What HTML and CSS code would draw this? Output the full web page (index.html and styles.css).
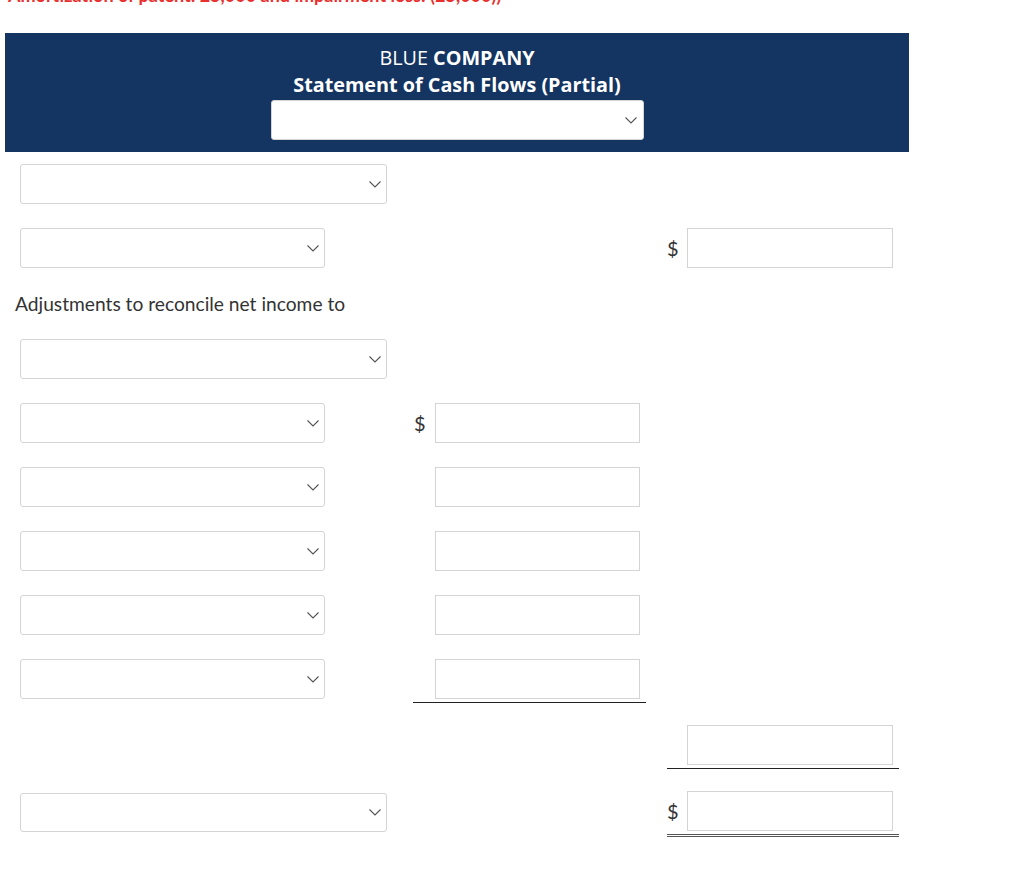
FILE: index.html
```html
<!DOCTYPE html>
<html lang="en">
<head>
<meta charset="utf-8">
<title>Blue Company - Statement of Cash Flows</title>
<link rel="stylesheet" href="styles.css">
</head>
<body>
<div class="note">Amortization of patent: 25,000 and impairment loss: (25,000))</div>

<div class="sheet-head">
  <div class="co"><span class="reg">BLUE</span> COMPANY</div>
  <div class="title">Statement of Cash Flows (Partial)</div>
  <div class="select head-select"><svg class="chev" width="12" height="7" viewBox="0 0 12 7"><path d="M0.5 0.5 L6 6 L11.5 0.5" fill="none" stroke="#555" stroke-width="1.1"/></svg></div>
</div>

<div class="rows">
  <div class="row r1">
    <div class="select wide"><svg class="chev" width="12" height="7" viewBox="0 0 12 7"><path d="M0.5 0.5 L6 6 L11.5 0.5" fill="none" stroke="#555" stroke-width="1.1"/></svg></div>
  </div>

  <div class="row">
    <div class="select narrow"><svg class="chev" width="12" height="7" viewBox="0 0 12 7"><path d="M0.5 0.5 L6 6 L11.5 0.5" fill="none" stroke="#555" stroke-width="1.1"/></svg></div>
    <div class="cell b"></div>
    <div class="gap"></div>
    <div class="cell c"><span class="cur">$</span><div class="input"></div></div>
  </div>

  <div class="label">Adjustments to reconcile net income to</div>

  <div class="row">
    <div class="select wide"><svg class="chev" width="12" height="7" viewBox="0 0 12 7"><path d="M0.5 0.5 L6 6 L11.5 0.5" fill="none" stroke="#555" stroke-width="1.1"/></svg></div>
  </div>

  <div class="row">
    <div class="select narrow"><svg class="chev" width="12" height="7" viewBox="0 0 12 7"><path d="M0.5 0.5 L6 6 L11.5 0.5" fill="none" stroke="#555" stroke-width="1.1"/></svg></div>
    <div class="cell b"><span class="cur">$</span><div class="input"></div></div>
  </div>

  <div class="row">
    <div class="select narrow"><svg class="chev" width="12" height="7" viewBox="0 0 12 7"><path d="M0.5 0.5 L6 6 L11.5 0.5" fill="none" stroke="#555" stroke-width="1.1"/></svg></div>
    <div class="cell b"><span class="cur"></span><div class="input"></div></div>
  </div>

  <div class="row">
    <div class="select narrow"><svg class="chev" width="12" height="7" viewBox="0 0 12 7"><path d="M0.5 0.5 L6 6 L11.5 0.5" fill="none" stroke="#555" stroke-width="1.1"/></svg></div>
    <div class="cell b"><span class="cur"></span><div class="input"></div></div>
  </div>

  <div class="row">
    <div class="select narrow"><svg class="chev" width="12" height="7" viewBox="0 0 12 7"><path d="M0.5 0.5 L6 6 L11.5 0.5" fill="none" stroke="#555" stroke-width="1.1"/></svg></div>
    <div class="cell b"><span class="cur"></span><div class="input"></div></div>
  </div>

  <div class="row">
    <div class="select narrow"><svg class="chev" width="12" height="7" viewBox="0 0 12 7"><path d="M0.5 0.5 L6 6 L11.5 0.5" fill="none" stroke="#555" stroke-width="1.1"/></svg></div>
    <div class="cell b under"><span class="cur"></span><div class="input"></div></div>
  </div>

  <div class="row r9">
    <div class="empty"></div>
    <div class="cell b"></div>
    <div class="gap"></div>
    <div class="cell c under"><span class="cur"></span><div class="input"></div></div>
  </div>

  <div class="row r10">
    <div class="select wide low"><svg class="chev" width="12" height="7" viewBox="0 0 12 7"><path d="M0.5 0.5 L6 6 L11.5 0.5" fill="none" stroke="#555" stroke-width="1.1"/></svg></div>
    <div class="cell b"></div>
    <div class="gap"></div>
    <div class="cell c double"><span class="cur">$</span><div class="input"></div></div>
  </div>
</div>
</body>
</html>
```

FILE: styles.css
```css
* { box-sizing: border-box; }

body {
  margin: 0;
  padding-bottom: 40px;
  font-family: Lato, "Open Sans", "Liberation Sans", sans-serif;
  color: #333;
  background: #fff;
}

.note {
  margin-top: -16px;
  padding-left: 8px;
  height: 22px;
  line-height: 22px;
  font-size: 18px;
  font-weight: 700;
  color: #e8312f;
  white-space: nowrap;
  overflow: hidden;
}

.sheet-head {
  margin: 27px 0 0 5px;
  width: 904px;
  background: #143461;
  color: #fff;
  padding: 11px 0 12px;
  display: flex;
  flex-direction: column;
  align-items: center;
}

.co, .title {
  font-family: "Open Sans", Lato, "Liberation Sans", sans-serif;
  font-size: 19.8px;
  line-height: 27px;
  font-weight: 700;
}

.co .reg { font-weight: 400; }

.select {
  height: 40px;
  background: #fff;
  border: 1px solid #d4d4d4;
  border-radius: 3px;
  display: flex;
  align-items: center;
  justify-content: flex-end;
  padding-right: 5px;
}

.head-select {
  width: 373px;
  margin-top: 2px;
  padding-right: 6px;
}

.rows {
  padding-left: 20px;
  margin-top: 12px;
}

.row {
  display: grid;
  grid-template-columns: 393px 233px 21px 232px;
  grid-template-rows: 40px;
  align-items: start;
  margin-top: 24px;
}

.row.r1 { margin-top: 0; }
.row.r9 { margin-top: 26px; }
.row.r10 { margin-top: 26px; }

.wide { width: 367px; }
.narrow { width: 305px; }
.select.low { margin-top: 2px; height: 39px; }

.label {
  margin: 24px 0 24px -5px;
  font-size: 19.2px;
  line-height: 23px;
  color: #333;
}

.cell {
  display: flex;
  align-items: center;
  height: 40px;
  padding-right: 6px;
}

.cell.under {
  height: 44px;
  padding-bottom: 3px;
  border-bottom: 1px solid #222;
}

.cell.double {
  height: 46px;
  padding-bottom: 3px;
  border-bottom: 3px double #555;
}

.cur {
  width: 22px;
  padding-left: 1px;
  font-size: 20px;
  color: #333;
}

.cell.c .cur { width: 20px; padding-left: 0; }

.input {
  flex: 1;
  height: 40px;
  background: #fff;
  border: 1px solid #d4d4d4;
}

.cell.under .input, .cell.double .input { height: 40px; flex: none; }
.cell.b.under .input { width: 205px; }
.cell.c.under .input, .cell.c.double .input { width: 206px; }
```
